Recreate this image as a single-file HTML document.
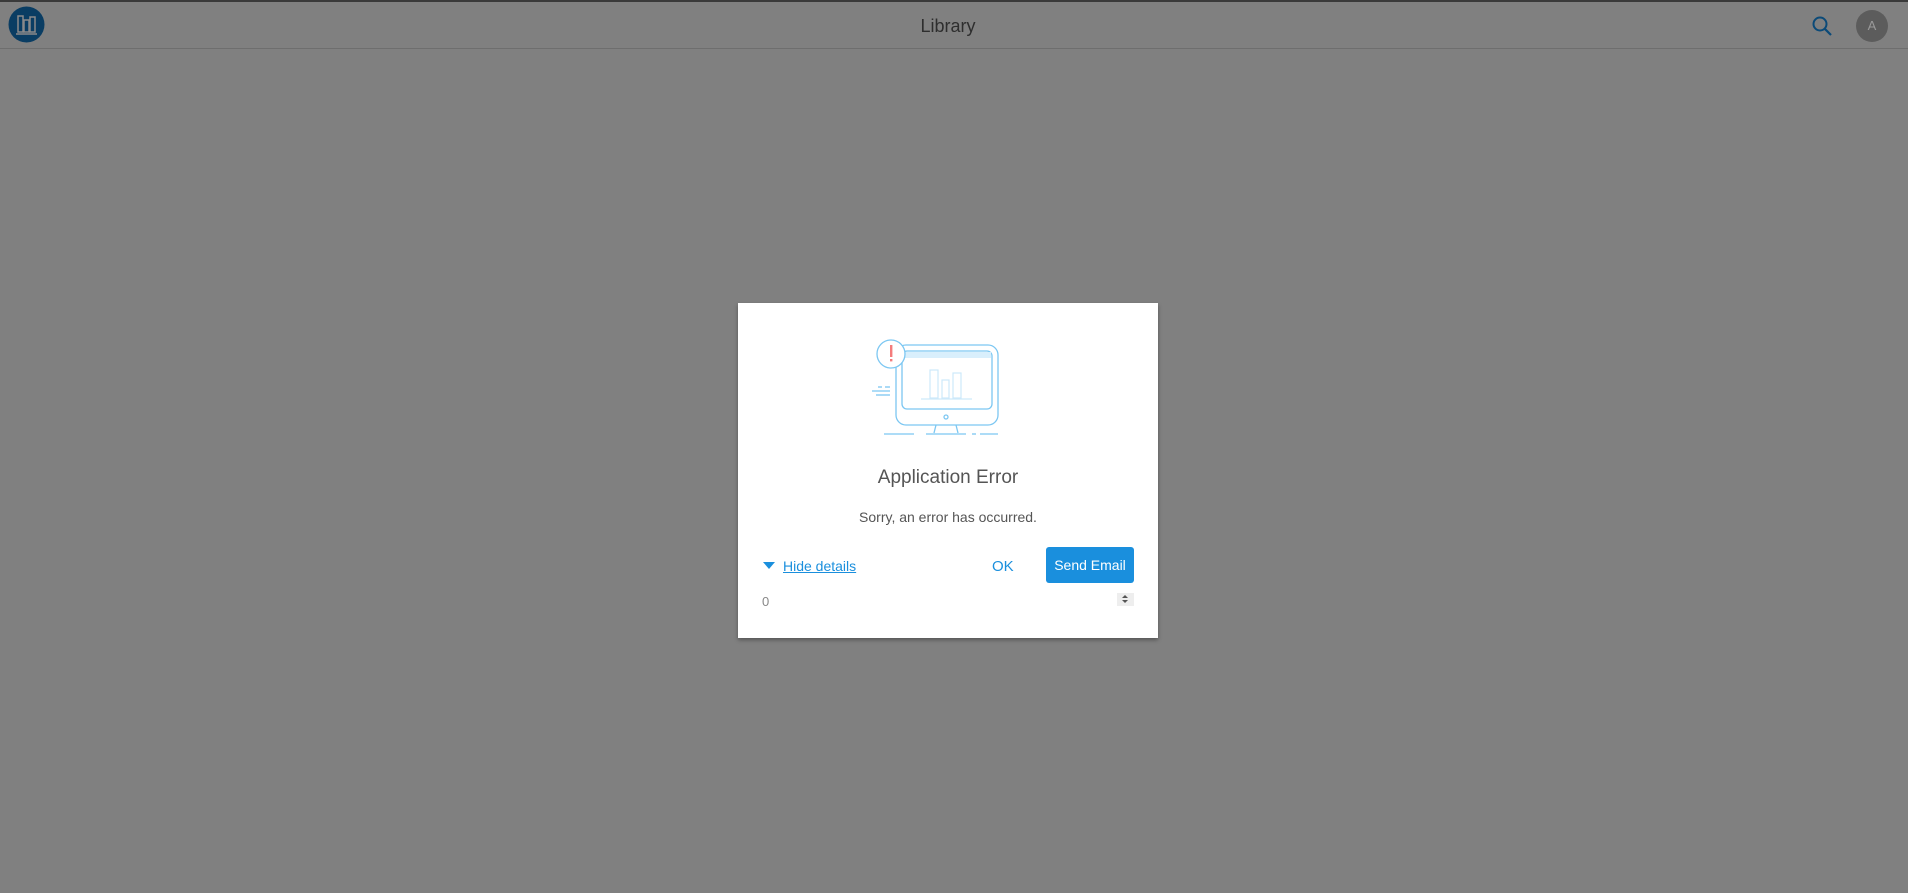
<!DOCTYPE html>
<html><head><style>
html,body{margin:0;padding:0;width:1908px;height:893px;overflow:hidden;background:#808080;font-family:"Liberation Sans",sans-serif;}
.top{position:absolute;left:0;top:0;width:1908px;height:2px;background:#3a3a3a}
.hdr{position:absolute;left:0;top:2px;width:1908px;height:46px;border-bottom:1px solid #6e6e6e}
.ttl{position:absolute;left:0;width:1896px;top:14px;text-align:center;font-size:18px;color:#2e2e2e}
.dlg{position:absolute;left:738px;top:303px;width:420px;height:335px;background:#fff;box-shadow:0 2px 4px rgba(0,0,0,.35)}
.t{position:absolute;left:0;width:420px;text-align:center;color:#555}
</style></head><body>
<div class="top"></div>
<div class="hdr">
<svg style="position:absolute;left:8px;top:4px" width="37" height="37" viewBox="0 0 37 37"><circle cx="18.5" cy="18.5" r="18" fill="#0a3d63"/><g fill="none" stroke="#8a8a8a" stroke-width="1.5"><rect x="10" y="10" width="5" height="16"/><rect x="16" y="14" width="5" height="12"/><rect x="22" y="11" width="5" height="15"/><line x1="8" y1="28" x2="29" y2="28"/></g></svg>
<div class="ttl">Library</div>
<svg style="position:absolute;left:1810px;top:12px" width="24" height="24" viewBox="0 0 24 24"><circle cx="10" cy="10" r="6.5" fill="none" stroke="#0b4a78" stroke-width="2"/><line x1="14.8" y1="14.8" x2="21" y2="21" stroke="#0b4a78" stroke-width="2.2"/></svg>
<div style="position:absolute;left:1856px;top:8px;width:32px;height:32px;border-radius:50%;background:#5c5c5c;color:#9a9a9a;font-size:13px;text-align:center;line-height:32px">A</div>
</div>
<div class="dlg">
<svg style="position:absolute;left:128px;top:34px" width="136" height="100" viewBox="0 0 136 100">
<g fill="none" stroke="#7cc7f2" stroke-width="1.3">
<rect x="30" y="8" width="102" height="80" rx="10"/>
<rect x="36" y="14" width="90" height="58" rx="5"/>
<rect x="37" y="15" width="88" height="6" fill="#d9effc" stroke="none"/>
<circle cx="80" cy="80" r="2"/>
<path d="M70 88 L68 96 M90 88 L92 96"/>
<line x1="18" y1="97" x2="48" y2="97"/><line x1="60" y1="97" x2="100" y2="97"/><line x1="106" y1="97" x2="110" y2="97"/><line x1="114" y1="97" x2="132" y2="97"/>
<line x1="6" y1="54" x2="24" y2="54"/><line x1="12" y1="50" x2="16" y2="50"/><line x1="19" y1="50" x2="24" y2="50"/><line x1="10" y1="58" x2="24" y2="58"/>
</g>
<g fill="none" stroke="#cde9fa" stroke-width="1.2"><rect x="64" y="33" width="8" height="28"/><rect x="76" y="43" width="7" height="18"/><rect x="87" y="36" width="8" height="25"/><line x1="55" y1="62" x2="106" y2="62"/></g>
<circle cx="25" cy="17" r="14" fill="#fff" stroke="#7cc7f2" stroke-width="1.3"/>
<rect x="24" y="8" width="2.4" height="12" fill="#f47c7c"/><rect x="24" y="22" width="2.4" height="2.4" fill="#f47c7c"/>
</svg>
<div class="t" style="top:164px;font-size:19px;color:#555">Application Error</div>
<div class="t" style="top:206px;font-size:14px;color:#555">Sorry, an error has occurred.</div>
<div style="position:absolute;left:25px;top:259px;width:0;height:0;border-left:6px solid transparent;border-right:6px solid transparent;border-top:7px solid #1a8fdd"></div>
<div style="position:absolute;left:45px;top:255px;font-size:14px;color:#1a8fdd;text-decoration:underline">Hide details</div>
<div style="position:absolute;left:254px;top:255px;font-size:15px;color:#1a8fdd">OK</div>
<div style="position:absolute;left:308px;top:244px;width:88px;height:36px;border-radius:3px;background:#1a8fdd;color:#fff;font-size:14px;text-align:center;line-height:36px">Send Email</div>
<div style="position:absolute;left:24px;top:291px;font-size:13px;color:#888">0</div>
<div style="position:absolute;left:379px;top:290px;width:17px;height:13px;background:#eee"><div style="position:absolute;left:5px;top:2px;border-left:3px solid transparent;border-right:3px solid transparent;border-bottom:3px solid #555"></div><div style="position:absolute;left:5px;top:7px;border-left:3px solid transparent;border-right:3px solid transparent;border-top:3px solid #555"></div></div>
</div>
</body></html>
